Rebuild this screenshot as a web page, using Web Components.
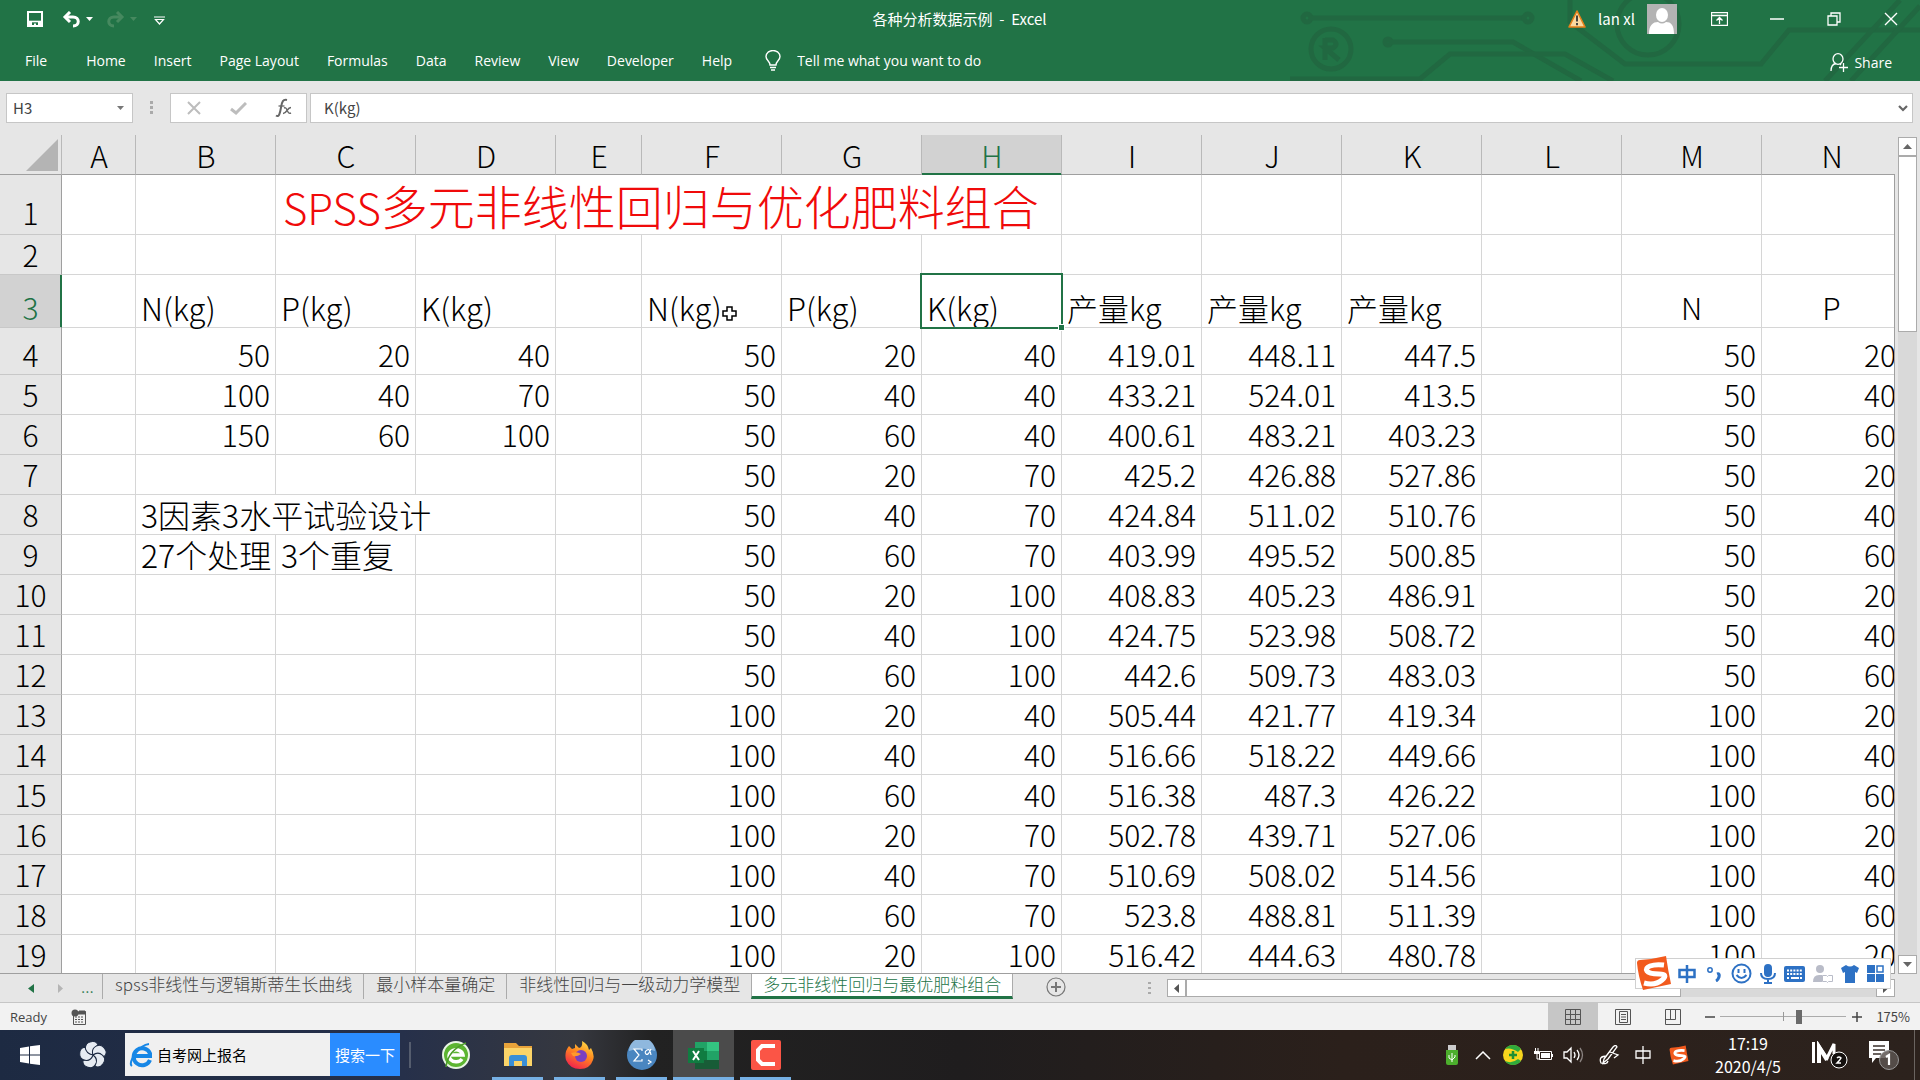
<!DOCTYPE html>
<html lang="zh-CN">
<head>
<meta charset="utf-8">
<title>各种分析数据示例 - Excel</title>
<style>
  html, body { height: 100%; }
  body {
    margin: 0;
    overflow: hidden;
    font-family: "Noto Sans CJK SC", "Noto Sans", sans-serif;
    background: #e6e6e6;
  }
</style>
</head>
<body>
<excel-app></excel-app>

<script>
// Shared base: every element renders its own template into an open shadow root
class BaseElement extends HTMLElement {
  constructor() {
    super()
    this.attachShadow({ mode: 'open' })
  }

  connectedCallback() {
    this.shadowRoot.innerHTML = `
      <style>
        * { box-sizing: border-box; }
        button, input { font: inherit; color: inherit; border: 0; padding: 0; margin: 0; background: none; outline: 0; border-radius: 0; }
        svg { display: block; flex: none; }
      </style>
      ${this.template()}
    `
  }
}

/* Button with an icon in its slot */
class IconButton extends BaseElement {
  template() {
    return `
      <style>
        :host { display: flex; flex: none; }
        button { display: flex; align-items: center; justify-content: center; width: 100%; height: 100%; }
      </style>
      <button type="button" aria-label="${this.getAttribute('label') || ''}"><slot></slot></button>
    `
  }
}

class TitleBar extends BaseElement {
  template() {
    return `
      <style>
        :host { display: grid; grid-template-columns: 1fr auto 1fr; align-items: center; height: 38px; padding-right: 1px; color: #fff; font-size: 15px; line-height: 20px; }
        .quick { display: flex; align-items: center; padding-left: 27px; }
        .quick icon-button:nth-child(2) { margin-left: 19px; }
        .quick icon-button:nth-child(3) { margin-left: 5px; }
        .quick icon-button:nth-child(4) { margin-left: 13px; }
        .quick icon-button:nth-child(5) { margin-left: 5px; }
        .quick icon-button:nth-child(6) { margin-left: 17px; }
        .title { white-space: pre; }
        .right { display: flex; align-items: center; justify-content: flex-end; }
        .name { margin: 0 12px; }
        .avatar { margin-right: 14px; }
        .win { width: 57px; height: 38px; }
      </style>
      <div class="quick">
        <icon-button label="Save"><svg width="16" height="16" viewBox="0 0 16 16" fill="none" stroke="#fff" stroke-width="2"><path d="M1 1h14v14H1z"/><path d="M1 10.500h14" stroke-width="1.600"/><path d="M1 11h4v4H1zM11 11h4v4h-4zM7 12.500h2V15H7z" fill="#fff" stroke="none"/></svg></icon-button>
        <icon-button label="Undo"><svg width="19" height="17" viewBox="0 0 19 17" fill="none" stroke="#fff" stroke-width="3"><path d="M3 6h8c7 0 7 9 0 9"/><path d="M8 1L3 6l5 5"/></svg></icon-button>
        <icon-button label="Undo list"><svg width="7" height="4" viewBox="0 0 7 4"><path d="M0 0h7L3.500 4z" fill="#fff"/></svg></icon-button>
        <icon-button label="Redo"><svg width="19" height="17" viewBox="0 0 19 17" fill="none" stroke="#46895f" stroke-width="3"><path d="M16 6H8c-7 0-7 9 0 9"/><path d="M11 1l5 5-5 5"/></svg></icon-button>
        <icon-button label="Redo list"><svg width="7" height="4" viewBox="0 0 7 4"><path d="M0 0h7L3.500 4z" fill="#46895f"/></svg></icon-button>
        <icon-button label="Customize Quick Access Toolbar"><svg width="11" height="12" viewBox="0 0 11 12" fill="none" stroke="#fff" stroke-width="1.200"><path d="M0 4h11M1.500 6.500h8L5.500 11z"/></svg></icon-button>
      </div>
      <div class="title">各种分析数据示例  -  Excel</div>
      <div class="right">
        <svg width="18" height="18" viewBox="0 0 18 18"><path d="M9 1l8 16H1z" fill="#fbd9a0" stroke="#e8801a" stroke-width="1.600" stroke-linejoin="round"/><path d="M9 5.500v6M9 13v2.200" stroke="#333" stroke-width="1.800"/></svg>
        <span class="name">lan xl</span>
        <svg class="avatar" width="30" height="30" viewBox="0 0 30 30"><path d="M0 0h30v30H0z" fill="#b3b3b3"/><ellipse cx="15" cy="11" rx="6" ry="7" fill="#fff"/><path d="M2 30c0-9 4-12 9-12q4 3 8 0c5 0 8 3 8 12z" fill="#fff"/></svg>
        <icon-button class="win" label="Ribbon Display Options"><svg width="17" height="14" viewBox="0 0 17 14" fill="none" stroke="#fff"><path d="M.5.5h16v13H.5zM.5 3.500h16M8.500 12V6M5.500 8.500l3-3 3 3" stroke-width="1.300"/></svg></icon-button>
        <icon-button class="win" label="Minimize"><svg width="14" height="2"><path d="M0 1h14" stroke="#fff" stroke-width="1.500"/></svg></icon-button>
        <icon-button class="win" label="Restore"><svg width="14" height="14" viewBox="0 0 14 14" fill="none" stroke="#fff" stroke-width="1.300"><path d="M1 4h9v9H1zM4 4V1h9v9h-3"/></svg></icon-button>
        <icon-button class="win" label="Close"><svg width="14" height="14" viewBox="0 0 14 14" stroke="#fff" stroke-width="1.400"><path d="M1 1l12 12M13 1L1 13"/></svg></icon-button>
      </div>
    `
  }
}

class RibbonTabs extends BaseElement {
  template() {
    const tabs = ['Home', 'Insert', 'Page Layout', 'Formulas', 'Data', 'Review', 'View', 'Developer', 'Help']
    return `
      <style>
        :host { display: flex; align-items: center; height: 43px; padding: 6px 28px 0 25px; color: #fff; font-family: "Open Sans", "Noto Sans", sans-serif; font-size: 14px; line-height: 20px; }
        nav { display: flex; gap: 28px; margin-left: 39px; padding-bottom: 4px; }
        .file, .tell { padding-bottom: 4px; }
        .tell { display: flex; align-items: center; gap: 16px; margin-left: 33px; flex: 1; }
        input { width: 240px; }
        input::placeholder { color: #fff; opacity: 1; }
        .share { display: flex; align-items: center; gap: 6px; }
      </style>
      <button class="file" type="button">File</button>
      <nav>${tabs.map(t => `<button type="button">${t}</button>`).join('')}</nav>
      <label class="tell">
        <svg width="16" height="21" viewBox="0 0 16 21" fill="none" stroke="#fff" stroke-width="1.400"><path d="M5 15c0-4-4-4.500-4-8.500a7 6 0 0 1 14 0C15 10.500 11 11 11 15zM5 17.500h6M6 20h4"/></svg>
        <input type="text" placeholder="Tell me what you want to do" aria-label="Tell me what you want to do">
      </label>
      <button class="share" type="button">
        <svg width="18" height="19" viewBox="0 0 18 19" fill="none" stroke="#fff" stroke-width="1.300"><ellipse cx="8" cy="6" rx="5" ry="5.300"/><path d="M1 18c0-5 2-7 5-7.500M10 11l1 1M9 14.500h9M13.500 10v9"/></svg>
        Share
      </button>
    `
  }
}

class AppHeader extends BaseElement {
  template() {
    return `
      <style>
        :host { display: block; position: relative; background: #217346; overflow: hidden; flex: none; }
        .art { position: absolute; top: 0; right: 0; }
        .bars { position: relative; }
      </style>
      <svg class="art" width="640" height="81" viewBox="0 0 640 81" fill="none" stroke="#216841" stroke-width="5">
        <circle cx="27" cy="18" r="4"/><path d="M31 18h212"/><circle cx="248" cy="18" r="4"/>
        <circle cx="51" cy="49" r="20"/><path d="M45 38v22M45 40h8q6 4 0 8h-8l14 12"/>
        <circle cx="108" cy="42" r="3"/><path d="M111 42h122l68 39"/>
        <path d="M10 79h130l30-25h115l48 27"/>
        <circle cx="368" cy="24" r="31"/><path d="M290 0v22l55 42h136l28-34h131"/>
        <path d="M545 81L620 0M571 81L640 6"/>
      </svg>
      <div class="bars"><slot></slot></div>
    `
  }
}

class FormulaBar extends BaseElement {
  template() {
    return `
      <style>
        :host { display: flex; flex: none; height: 50px; padding: 12px 7px 8px 6px; background: #e6e6e6; color: #444; font-size: 15px; line-height: 20px; }
        .box { display: flex; align-items: center; background: #fff; border: 1px solid #c6c6c6; }
        .name { width: 127px; padding: 0 8px 0 6px; }
        .name input { flex: 1; min-width: 0; }
        .grip { width: 37px; display: flex; align-items: center; justify-content: center; }
        .fx { width: 137px; margin-right: 3px; }
        .fx icon-button { flex: 1; height: 28px; }
        .text { flex: 1; padding: 0 4px 0 13px; }
        .text input { flex: 1; min-width: 0; }
      </style>
      <div class="box name">
        <input type="text" value="H3" aria-label="Name Box">
        <icon-button label="Names"><svg width="7" height="4"><path d="M0 0h7L3.500 4z" fill="#777"/></svg></icon-button>
      </div>
      <div class="grip"><svg width="3" height="16" fill="#aaa"><path d="M0 1h3v3H0zM0 6h3v3H0zM0 11h3v3H0z"/></svg></div>
      <div class="box fx">
        <icon-button label="Cancel"><svg width="14" height="14" viewBox="0 0 14 14" stroke="#bdbdbd" stroke-width="2"><path d="M1 1l12 12M13 1L1 13"/></svg></icon-button>
        <icon-button label="Enter"><svg width="17" height="13" viewBox="0 0 17 13" fill="none" stroke="#bdbdbd" stroke-width="3"><path d="M1 7l5 4L16 1"/></svg></icon-button>
        <icon-button label="Insert Function"><svg width="17" height="20" viewBox="0 0 17 20" fill="none" stroke="#666"><path d="M1 17.500c3 2 4-2 5-8S8 1 12 2" stroke-width="2"/><path d="M3.500 8h6" stroke-width="1.300"/><path d="M9 10q2-1 3 2l1 2q1 2 3 1M16 9.500q-2 0-4 3t-4 3" stroke-width="1.400"/></svg></icon-button>
      </div>
      <div class="box text">
        <input type="text" value="K(kg)" aria-label="Formula Bar">
        <icon-button label="Expand Formula Bar"><svg width="10" height="7" viewBox="0 0 10 7" fill="none" stroke="#666" stroke-width="2.200"><path d="M1 1l4 4 4-4"/></svg></icon-button>
      </div>
    `
  }
}

const YIELDS = [
  [50, 20, 40, 419.01, 448.11, 447.5],
  [50, 40, 40, 433.21, 524.01, 413.5],
  [50, 60, 40, 400.61, 483.21, 403.23],
  [50, 20, 70, 425.2, 426.88, 527.86],
  [50, 40, 70, 424.84, 511.02, 510.76],
  [50, 60, 70, 403.99, 495.52, 500.85],
  [50, 20, 100, 408.83, 405.23, 486.91],
  [50, 40, 100, 424.75, 523.98, 508.72],
  [50, 60, 100, 442.6, 509.73, 483.03],
  [100, 20, 40, 505.44, 421.77, 419.34],
  [100, 40, 40, 516.66, 518.22, 449.66],
  [100, 60, 40, 516.38, 487.3, 426.22],
  [100, 20, 70, 502.78, 439.71, 527.06],
  [100, 40, 70, 510.69, 508.02, 514.56],
  [100, 60, 70, 523.8, 488.81, 511.39],
  [100, 20, 100, 516.42, 444.63, 480.78]
]

// Columns B-D of the rows that hold something there
const LEFT = {
  4: [50, 20, 40],
  5: [100, 40, 70],
  6: [150, 60, 100]
}

class SheetGrid extends BaseElement {
  cells(n) {
    const td = (v = '', cls = '') => `<td${cls ? ` class="${cls}"` : ''}>${v}</td>`
    if (n === 1) {
      return td() + td() + '<td class="title" colspan="6"><span>SPSS</span>多元非线性回归与优化肥料组合</td>' + td().repeat(6)
    }
    if (n === 2) return td().repeat(14)
    if (n === 3) {
      const t = v => td(v, 'text')
      return td() + t('N(kg)') + t('P(kg)') + t('K(kg)') + td() + t('N(kg)') + t('P(kg)') +
        td('K(kg)', 'text active') + t('产量kg').repeat(3) + td() + td('N', 'mid') + td('P', 'mid')
    }
    let left
    if (n === 8) left = '<td class="text note" colspan="3">3因素3水平试验设计</td>'
    else if (n === 9) left = td('27个处理', 'text note') + td('3个重复', 'text note') + td()
    else left = (LEFT[n] || ['', '', '']).map(v => td(v)).join('')
    const row = YIELDS[n - 4]
    return td() + left + td() + row.map(v => td(v)).join('') + td() + td(row[0]) + td(row[1])
  }

  template() {
    const cols = 'ABCDEFGHIJKLMN'.split('')
    const rows = Array.from({ length: 19 }, (_, i) => i + 1)
    return `
      <style>
        :host { display: block; flex: 1; min-width: 0; overflow: hidden; padding-top: 4px; border-bottom: 1px solid #9f9f9f; font-size: 30px; line-height: 40px; font-weight: 300; color: #000; }
        table { table-layout: fixed; width: 1902px; border-collapse: separate; border-spacing: 0; }
        th, td { padding: 0; font-weight: 300; white-space: nowrap; vertical-align: bottom; }
        th { background: #e6e6e6; }
        thead th { height: 40px; line-height: 37px; padding: 2px 0 0 1px; border-right: 1px solid #b9b9b9; border-bottom: 1px solid #9f9f9f; }
        thead th.on { background: #d2d2d2; color: #217346; border-bottom-color: #217346; box-shadow: inset 0 -1px #217346; }
        thead th:first-child svg { margin: 0 3px 3px auto; }
        tbody th { border-right: 1px solid #9f9f9f; border-bottom: 1px solid #c8c8c8; line-height: 39px; }
        tbody th.on { background: #d2d2d2; color: #217346; border-right-color: #217346; box-shadow: inset -1px 0 #217346; }
        td { height: 40px; line-height: 39px; background: #fff; border-right: 1px solid #d6d6d6; border-bottom: 1px solid #d6d6d6; text-align: right; padding: 0 5px; }
        .text { text-align: left; font-size: 31px; padding: 0 0 0 5px; }
        .mid { text-align: center; }
        .note { font-size: 32px; }
        .r1 td { height: 60px; line-height: 59px; }
        .r1 th, .r1 td { vertical-align: baseline; }
        .title { color: #f00a0a; font-size: 47px; text-align: left; padding: 0 0 0 7px; }
        .title span { font-size: 42px; line-height: 40px; }
        .r3 td { height: 53px; }
        .r4 td { height: 47px; }
        .active { position: relative; }
        .active::before { content: ""; position: absolute; inset: -2px; border: 2px solid #217346; }
        .active::after { content: ""; position: absolute; right: -4px; bottom: -4px; width: 5px; height: 5px; background: #217346; border: 1px solid #fff; }
      </style>
      <table>
        <colgroup><col style="width:62px"><col style="width:74px"><col span="3" style="width:140px"><col style="width:86px"><col span="9" style="width:140px"></colgroup>
        <thead>
          <tr><th><svg width="32" height="32"><path d="M32 0v32H0z" fill="#b4b4b4"/></svg></th>${cols.map(c => `<th scope="col"${c === 'H' ? ' class="on"' : ''}>${c}</th>`).join('')}</tr>
        </thead>
        <tbody>
          ${rows.map(n => `<tr class="r${n}"><th scope="row"${n === 3 ? ' class="on"' : ''}>${n}</th>${this.cells(n)}</tr>`).join('')}
        </tbody>
      </table>
    `
  }
}

class VerticalScroll extends BaseElement {
  template() {
    return `
      <style>
        :host { display: flex; flex-direction: column; flex: none; width: 19px; margin: 6px 3px 0; background: #d9d9d9; }
        icon-button, .thumb { background: #fff; border: 1px solid #ababab; }
        icon-button { height: 19px; }
        .thumb { flex: 0 0 21%; }
        .track { flex: 1; }
      </style>
      <icon-button label="Scroll up"><svg width="9" height="5"><path d="M0 5h9L4.500 0z" fill="#666"/></svg></icon-button>
      <div class="thumb"></div>
      <div class="track"></div>
      <icon-button label="Scroll down"><svg width="9" height="5"><path d="M0 0h9L4.500 5z" fill="#666"/></svg></icon-button>
    `
  }
}

class HorizontalScroll extends BaseElement {
  template() {
    return `
      <style>
        :host { display: flex; flex: 1; height: 18px; margin-right: 25px; background: #d9d9d9; }
        icon-button, .thumb { background: #fff; border: 1px solid #ababab; }
        icon-button { width: 19px; }
        .thumb { flex: 0 0 68%; }
        .track { flex: 1; }
      </style>
      <icon-button label="Scroll left"><svg width="5" height="9"><path d="M5 0v9L0 4.500z" fill="#555"/></svg></icon-button>
      <div class="thumb"></div>
      <div class="track"></div>
      <icon-button label="Scroll right"><svg width="5" height="9"><path d="M0 0v9l5-4.500z" fill="#555"/></svg></icon-button>
    `
  }
}

class SheetTabs extends BaseElement {
  template() {
    const tabs = ['spss非线性与逻辑斯蒂生长曲线', '最小样本量确定', '非线性回归与一级动力学模型', '多元非线性回归与最优肥料组合']
    return `
      <style>
        :host { display: flex; flex: none; height: 29px; background: #e6e6e6; border-bottom: 1px solid #c6c6c6; color: #444; font-size: 17px; line-height: 20px; font-weight: 300; }
        .nav { display: flex; align-items: center; width: 102px; padding-left: 28px; }
        .nav icon-button + icon-button { margin-left: 24px; }
        .nav button { margin: 0 0 5px 18px; color: #217346; }
        .tab { height: 25px; padding: 0 11px 5px 12px; border-left: 1px solid #ababab; flex: none; white-space: nowrap; }
        .tab.on { background: #fff; color: #217346; border-right: 1px solid #ababab; border-bottom: 3px solid #217346; padding: 0 11px 2px; }
        .add { width: 20px; height: 26px; margin-left: 33px; }
        .grip { margin: 7px 16px 0 82px; }
        horizontal-scroll { margin-top: 5px; }
      </style>
      <div class="nav">
        <icon-button label="Previous sheet"><svg width="6" height="9"><path d="M6 0v9L0 4.500z" fill="#217346"/></svg></icon-button>
        <icon-button label="Next sheet"><svg width="5" height="9"><path d="M0 0v9l5-4.500z" fill="#b5b5b5"/></svg></icon-button>
        <button type="button">...</button>
      </div>
      ${tabs.map((t, i) => `<button type="button" class="tab${i === 3 ? ' on' : ''}">${t}</button>`).join('')}
      <icon-button class="add" label="New sheet"><svg width="20" height="20" viewBox="0 0 20 20" fill="none" stroke="#777" stroke-width="1.200"><circle cx="10" cy="10" r="9"/><path d="M10 5v10M5 10h10" stroke-width="2"/></svg></icon-button>
      <svg class="grip" width="3" height="16" fill="#aaa"><path d="M0 1h3v2H0zM0 6h3v2H0zM0 11h3v2H0z"/></svg>
      <horizontal-scroll></horizontal-scroll>
    `
  }
}

class StatusBar extends BaseElement {
  template() {
    return `
      <style>
        :host { display: flex; align-items: center; flex: none; height: 27px; padding: 0 10px; background: #f2f2f2; color: #444; font-size: 13px; line-height: 20px; }
        .ready { margin-right: 24px; font-family: "Open Sans", "Noto Sans", sans-serif; }
        .space { flex: 1; }
        .view { width: 50px; height: 27px; }
        .view.on { background: #c6c6c6; }
        .minus { margin-left: 7px; }
        input { appearance: none; width: 126px; height: 15px; margin: 0 6px 0 5px;
          background: linear-gradient(#999, #999) 63px 3px / 1px 9px no-repeat, linear-gradient(#ababab, #ababab) 0 7px / 100% 1px no-repeat; }
        input::-webkit-slider-thumb { appearance: none; width: 6px; height: 14px; background: #6a6a6a; }
        .pct { margin-left: 14px; }
      </style>
      <span class="ready">Ready</span>
      <icon-button label="Macro recording"><svg width="16" height="16" viewBox="0 0 16 16" fill="none" stroke="#555"><path d="M2.500 6v9.500h12V2.500H8"/><path d="M8 2h6v3H7z" fill="#555"/><circle cx="4" cy="4" r="3.500" fill="#555" stroke="none"/><path d="M4 8h9M4 10.500h9M4 13h9" stroke-dasharray="2 1"/></svg></icon-button>
      <div class="space"></div>
      <icon-button class="view on" label="Normal"><svg width="16" height="16" viewBox="0 0 16 16" fill="none" stroke="#555"><path d="M.5.5h15v15H.5zM.5 5.500h15M.5 10.500h15M5.500.5v15M10.500.5v15"/></svg></icon-button>
      <icon-button class="view" label="Page Layout"><svg width="16" height="16" viewBox="0 0 16 16" fill="none" stroke="#555"><path d="M.5.5h15v15H.5zM4.500 2.500h8v11h-8zM6 5.500h5M6 8h5M6 10.500h5"/></svg></icon-button>
      <icon-button class="view" label="Page Break Preview"><svg width="16" height="16" viewBox="0 0 16 16" fill="none" stroke="#555"><path d="M.5.5h15v15H.5zM.5 10.500h10M5.500.5v10M10.500.5v10"/></svg></icon-button>
      <icon-button class="minus" label="Zoom out"><svg width="10" height="10"><path d="M0 5h10" stroke="#444" stroke-width="1.500"/></svg></icon-button>
      <input type="range" min="0" max="100" value="63" aria-label="Zoom">
      <icon-button label="Zoom in"><svg width="10" height="10"><path d="M0 5h10M5 0v10" stroke="#444" stroke-width="1.500"/></svg></icon-button>
      <span class="pct">175%</span>
    `
  }
}

/* Pinned or running program on the taskbar */
class TaskItem extends BaseElement {
  template() {
    return `
      <style>
        :host { display: flex; flex: none; width: 51px; height: 50px; border-bottom: 3px solid transparent; }
        :host([running]) { border-bottom-color: #76b0e4; }
        :host([current]) { width: 61px; margin: 0 -5px; background: #4b4b4b; }
        button { display: flex; flex: 1; align-items: center; justify-content: center; padding-top: 3px; }
      </style>
      <button type="button" aria-label="${this.getAttribute('label')}"><slot></slot></button>
    `
  }
}

const SOGOU = size => `<svg width="${size}" height="${size}" viewBox="0 0 36 36"><path d="M4 5Q18 4 30 1q2 14 5 28-14 3-28 6Q2 20 1 8q0-3 3-3z" fill="#f25a1d"/><path d="M28 10q-9-1-14 1t-3 5 12 3 3 6-18 3" fill="none" stroke="#fff" stroke-width="5"/></svg>`

class TaskBar extends BaseElement {
  template() {
    return `
      <style>
        :host { display: flex; align-items: center; flex: none; height: 50px; color: #fff; font-size: 15px; line-height: 23px;
          background: linear-gradient(90deg, #1d2a42 0, #26304a 21%, #36383f 30%, #222 34%, #1f1d1e 50%, #2b201b 70%, #2c221d 100%); }
        .start { width: 60px; height: 50px; margin-right: 3px; }
        .pin { width: 62px; height: 50px; padding-right: 2px; }
        .search { display: flex; height: 43px; background: #f0f0f0; color: #000; width: 275px; margin-bottom: 1px; }
        .search label { display: flex; align-items: center; flex: 1; gap: 4px; padding-left: 4px; min-width: 0; }
        .search input { flex: 1; min-width: 0; }
        .search button { width: 70px; background: #2a8cff; color: #fff; }
        .rule { width: 2px; height: 26px; margin: 0 19px 0 9px; background: #555d6e; }
        .apps { display: flex; gap: 11px; }
        .space { flex: 1; }
        .tray { display: flex; align-items: center; }
        .time { display: flex; flex-direction: column; align-items: center; width: 80px; margin: 0 24px 0 19px; font-size: 16px; }
        .end { width: 1px; height: 50px; background: #6a6460; margin: 0 5px 0 15px; }
      </style>
      <icon-button class="start" label="Start"><svg width="20" height="20" viewBox="0 0 20 20" fill="#fff"><path d="M0 3l9-1.500V9.500H0zM10 1.300L20 0v9.500H10zM0 10.500h9v8L0 17zM10 10.500h10V20l-10-1.300z"/></svg></icon-button>
      <icon-button class="pin" label="Sogou"><svg width="28" height="28" viewBox="0 0 28 28" fill="#e6ebf2" stroke="#1d2a42"><path id="p" d="M14 14C5 14 4 3 11 1q6-2 8 3-6 3-5 10z"/><use href="#p" transform="rotate(72 14 14)"/><use href="#p" transform="rotate(144 14 14)"/><use href="#p" transform="rotate(216 14 14)"/><use href="#p" transform="rotate(288 14 14)"/></svg></icon-button>
      <div class="search">
        <label>
          <svg width="24" height="26" viewBox="0 0 24 26" fill="none" stroke="#1787e6"><path d="M21 18a8.500 8.500 0 1 1 0-6.500v2.500H6" stroke-width="4"/><path d="M3 24c-5-3 7-21 17-22" stroke-width="2"/></svg>
          <input type="text" value="自考网上报名" aria-label="搜索">
        </label>
        <button type="button">搜索一下</button>
      </div>
      <div class="rule"></div>
      <div class="apps">
        <task-item label="360 Browser"><svg width="28" height="28" viewBox="0 0 28 28"><circle cx="14" cy="14" r="13" fill="#5cb531" stroke="#e9f5e4" stroke-width="2"/><path d="M20 18a7 6 0 1 1 1-4H8" fill="none" stroke="#fff" stroke-width="3.500"/><path d="M4 26Q6 9 24 2" fill="none" stroke="#4d9d2a" stroke-width="1.500"/></svg></task-item>
        <task-item running label="File Explorer"><svg width="28" height="24" viewBox="0 0 28 24"><path d="M0 0h12l3 3h13v20H0z" fill="#e8a33a"/><path d="M0 5h28v18H0z" fill="#fbd468"/><path d="M5 23v-8q0-3 3-3h12q3 0 3 3v8h-5v-5h-8v5z" fill="#3a8fd6"/></svg></task-item>
        <task-item running label="Firefox"><svg width="30" height="30" viewBox="0 0 30 30"><defs><linearGradient id="ff" x1=".8" y1="0" x2=".3" y2="1"><stop offset="0" stop-color="#ffe14a"/><stop offset=".45" stop-color="#ff8a1e"/><stop offset="1" stop-color="#f0204e"/></linearGradient></defs><path d="M4 6l3 3 3-1V4l4 4q4-1 3-7 6 3 7 9l2-2q4 7 2 12-3 9-13 9T1 20Q-1 12 4 6z" fill="url(#ff)"/><circle cx="16" cy="16" r="6" fill="#7a3fc0"/><path d="M6 13q6-2 10 1-4 3-8 2" fill="#ff9a2a"/></svg></task-item>
        <task-item running label="SPSS Statistics"><svg width="30" height="30" viewBox="0 0 30 30"><circle cx="15" cy="15" r="15" fill="#4a86c0"/><path d="M2 11a13 13 0 0 1 26 0Q15 6 2 11z" fill="#8fb8de"/><path d="M15 11V9H7l5 6-5 6h8v-2M24 9q-3 7-5 5t1-4 4 5M21 20l3 2-3 2" fill="none" stroke="#fff" stroke-width="1.200"/></svg></task-item>
        <task-item running current label="Excel"><svg width="31" height="27" viewBox="0 0 31 27"><path d="M7 0h24v27H7z" fill="#185c37"/><path d="M7 0h12v9H7z" fill="#21a366"/><path d="M19 0h12v9H19z" fill="#33c481"/><path d="M7 9h12v9H7z" fill="#107c41"/><path d="M19 9h12v9H19z" fill="#21a366"/><path d="M0 6h16v15H0z" fill="#107c41"/><path d="M5 9l6 9M11 9l-6 9" stroke="#fff" stroke-width="2"/></svg></task-item>
        <task-item running label="Camtasia"><svg width="30" height="30" viewBox="0 0 30 30"><rect width="30" height="30" rx="2" fill="#fb5546"/><path d="M24 6H11L7 10v10l4 4h13" fill="none" stroke="#fff" stroke-width="4"/></svg></task-item>
      </div>
      <div class="space"></div>
      <div class="tray">
        <svg width="12" height="20" viewBox="0 0 12 20"><path d="M2 0h8v6H2z" fill="#ccc"/><path d="M0 5h12v13q0 2-2 2H2q-2 0-2-2z" fill="#4cae2c"/><path d="M6 17V8M3 10v3l3 2 3-3v-2" fill="none" stroke="#fff"/></svg>
        <svg style="margin-left:17px" width="16" height="9" viewBox="0 0 16 9" fill="none" stroke="#fff" stroke-width="1.500"><path d="M1 8l7-7 7 7"/></svg>
        <svg style="margin-left:12px" width="20" height="20" viewBox="0 0 20 20"><circle cx="10" cy="10" r="10" fill="#f7d51d"/><path d="M2 4a10 10 0 0 1 16 0L15 7Q8 2 2 4zM2 16a10 10 0 0 0 16 0l-3-2q-6 5-13 2z" fill="#2faa3c"/><path d="M10 6v8M6 10h8" stroke="#1f8f34" stroke-width="2.500"/></svg>
        <svg style="margin-left:11px" width="19" height="16" viewBox="0 0 19 16" fill="none" stroke="#fff"><path d="M5.500 4.500h12v8h-12z"/><path d="M7 6h9v5H7zM0 4h5v3H0z" fill="#fff" stroke="none"/><path d="M1.500 1v3M4 1v3M3 7v5h3M18.500 7v3"/></svg>
        <svg style="margin-left:10px" width="21" height="18" viewBox="0 0 21 18" fill="none" stroke="#fff" stroke-width="1.300"><path d="M1 6h3l4-4v14l-4-4H1zM11 6q2 3 0 6M14 4q4 5 0 10"/><path d="M17 2q5 7 0 14" stroke="#8a8380"/></svg>
        <svg style="margin-left:15px" width="21" height="20" viewBox="0 0 21 20" fill="none" stroke="#fff" stroke-width="1.300"><path d="M5 14L14 2q3-3 4 0L9 14l-5 4zM11 7l8 3-4 3M8 11q-9 0-6 7 6 2 7-2"/></svg>
        <svg style="margin-left:15px" width="16" height="18" viewBox="0 0 16 18" fill="none" stroke="#fff" stroke-width="1.300"><path d="M1 5h14v7H1zM8 0v18"/></svg>
        <span style="margin-left:18px">${SOGOU(20)}</span>
        <div class="time"><span>17:19</span><span>2020/4/5</span></div>
        <svg width="36" height="28" viewBox="0 0 36 28" fill="none" stroke="#fff"><path d="M1.500 1v21M7 22V5l8 12 7-14v10" stroke-width="3"/><path d="M7 22V6l8 13" stroke-width="4"/><circle cx="27" cy="19" r="8" fill="#14100e"/><path d="M25 17q2-2 4 0-1 2-4 5h4" stroke-width="1.500"/></svg>
        <svg style="margin-left:21px" width="30" height="32" viewBox="0 0 30 32"><path d="M0 2h20v17H7l-4 5v-5H0z" fill="#fff"/><path d="M4 7h12M4 11h12M4 15h8" stroke="#3b302b" stroke-width="1.500"/><circle cx="20" cy="21" r="9.500" fill="#5c5350" fill-opacity=".85" stroke="#999"/><path d="M17 18l3-2v10" fill="none" stroke="#fff" stroke-width="2.200"/></svg>
        <div class="end"></div>
      </div>
    `
  }
}

/* Floating input method toolbar */
class ImeBar extends BaseElement {
  template() {
    return `
      <style>
        :host { display: flex; align-items: center; position: fixed; right: 29px; bottom: 91px; height: 31px; padding: 0 6px 0 42px; gap: 8px; background: #fff; border: 1px solid #d0d0d0; }
        .logo { position: absolute; left: 0; top: -4px; }
      </style>
      <span class="logo">${SOGOU(36)}</span>
      <svg width="18" height="18" viewBox="0 0 18 18" fill="none" stroke="#2d71c4" stroke-width="2.500"><path d="M1.500 5h15v7h-15zM9 0v18"/></svg>
      <svg width="19" height="16" viewBox="0 0 19 16" fill="none" stroke="#2d71c4"><circle cx="6" cy="4" r="2.200" stroke-width="1.500"/><path d="M13 8q3-1 2 3-1 3-3 4" stroke-width="3"/></svg>
      <svg width="21" height="21" viewBox="0 0 21 21" fill="none" stroke="#2d71c4" stroke-width="2"><circle cx="10.500" cy="10.500" r="9"/><path d="M7.500 6v4M13.500 6v4M5.500 12q5 6 10 0"/></svg>
      <svg width="16" height="20" viewBox="0 0 16 20" fill="none" stroke="#2d71c4" stroke-width="2"><rect x="5" y="1" width="6" height="11" rx="3" fill="#2d71c4"/><path d="M1 9q0 6 7 6t7-6M8 15v4M4 19h8"/></svg>
      <svg width="21" height="16" viewBox="0 0 21 16"><rect width="21" height="16" rx="2" fill="#2d71c4"/><path d="M3 4.500h15M3 8h15" stroke="#fff" stroke-width="1.800" stroke-dasharray="2 1.200"/><path d="M3 12h2M7 12h8M16 12h2" stroke="#fff" stroke-width="1.800"/></svg>
      <svg width="20" height="18" viewBox="0 0 20 18" fill="#b9bcc8"><circle cx="7" cy="4" r="4"/><path d="M0 17q0-7 6-7h3v7z"/><path d="M9.500 10.500h4l1 1 1-1h4v6h-4l-1 1-1-1h-4z" fill="#fff" stroke="#b9bcc8"/></svg>
      <svg width="18" height="18" viewBox="0 0 18 18" fill="#2d71c4"><path d="M5 0q4 3 8 0l5 3-2 5-2-1v11H4V7L2 8 0 3z"/></svg>
      <svg width="17" height="17" viewBox="0 0 17 17" fill="#2d71c4"><path d="M0 0h8v8H0zM0 9h8v8H0zM9 9h8v8H9z"/><path d="M10 1h6v6h-6z" fill="#fff" stroke="#2d71c4" stroke-width="1.500"/></svg>
    `
  }
}

class ExcelApp extends BaseElement {
  template() {
    return `
      <style>
        :host { display: flex; flex-direction: column; height: 100vh; }
        .sheet { display: flex; flex: 1; min-height: 0; }
        .edge { flex: none; width: 1px; margin-top: 43px; background: #9f9f9f; }
        .cursor { position: fixed; left: 721px; top: 305px; }
      </style>
      <app-header>
        <title-bar></title-bar>
        <ribbon-tabs></ribbon-tabs>
      </app-header>
      <formula-bar></formula-bar>
      <div class="sheet">
        <sheet-grid></sheet-grid>
        <div class="edge"></div>
        <vertical-scroll></vertical-scroll>
      </div>
      <sheet-tabs></sheet-tabs>
      <status-bar></status-bar>
      <task-bar></task-bar>
      <ime-bar></ime-bar>
      <svg class="cursor" width="17" height="17" viewBox="0 0 17 17"><path d="M6 2h5v4h4v5h-4v4H6v-4H2V6h4z" fill="#fff" stroke="#000" stroke-width="1.500"/></svg>
    `
  }
}

customElements.define('icon-button', IconButton)
customElements.define('task-item', TaskItem)
customElements.define('title-bar', TitleBar)
customElements.define('ribbon-tabs', RibbonTabs)
customElements.define('app-header', AppHeader)
customElements.define('formula-bar', FormulaBar)
customElements.define('sheet-grid', SheetGrid)
customElements.define('vertical-scroll', VerticalScroll)
customElements.define('horizontal-scroll', HorizontalScroll)
customElements.define('sheet-tabs', SheetTabs)
customElements.define('status-bar', StatusBar)
customElements.define('task-bar', TaskBar)
customElements.define('ime-bar', ImeBar)
customElements.define('excel-app', ExcelApp)
</script>
</body>
</html>
